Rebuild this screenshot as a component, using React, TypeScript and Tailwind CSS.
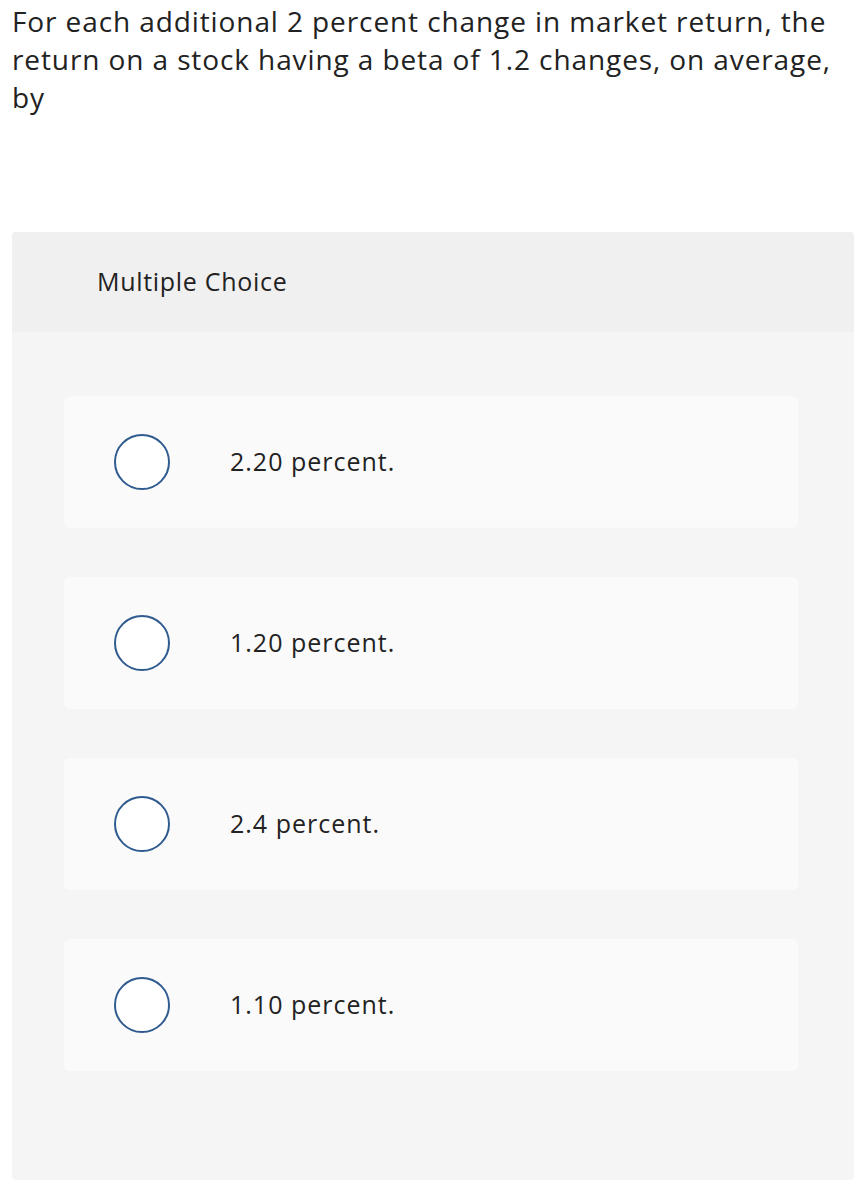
const options = ["2.20 percent.", "1.20 percent.", "2.4 percent.", "1.10 percent."];

const questionLines = [
  "For each additional 2 percent change in market return, the",
  "return on a stock having a beta of 1.2 changes, on average,",
  "by",
];

export default function App() {
  return (
    <div
      className="min-h-[1188px] w-[858px] bg-white text-[#222222]"
      style={{ fontFamily: "'Open Sans', sans-serif" }}
    >
      {/* Question */}
      <p className="px-[12px] pt-[2px] text-[28px] leading-[38px] tracking-[0.9px]">
        {questionLines.map((l) => (
          <span key={l} className="block whitespace-nowrap">
            {l}
          </span>
        ))}
      </p>

      {/* Answer card */}
      <div className="ml-[12px] mt-[116px] w-[842px] overflow-hidden rounded-[4px] bg-[#f5f5f5]">
        <div className="flex h-[100px] items-center bg-[#f0f0f0] pl-[85px] text-[25px] tracking-[0.7px]">
          Multiple Choice
        </div>
        <div className="flex flex-col gap-[49px] pb-[109px] pl-[52px] pr-[56px] pt-[64px]">
          {options.map((o) => (
            <div
              key={o}
              className="flex h-[132px] items-center rounded-[6px] bg-[#fafafa] pl-[50px]"
            >
              <span className="h-[56px] w-[56px] shrink-0 rounded-full border-2 border-[#2f5b8f] bg-white" />
              <span className="ml-[60px] text-[25px] tracking-[1px]">{o}</span>
            </div>
          ))}
        </div>
      </div>
    </div>
  );
}
